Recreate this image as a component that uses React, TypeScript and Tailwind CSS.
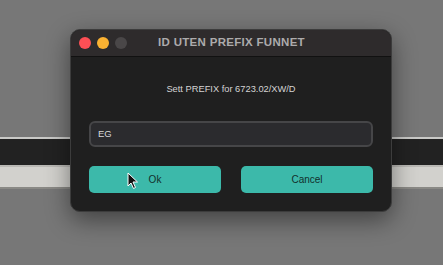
import React from "react";

function Cursor() {
  return (
    <svg width="12" height="18" viewBox="0 0 12 18" className="absolute left-[127px] top-[172px]">
      <path d="M1 1 L1 14 L4 11 L6.5 16.5 L8.5 15.5 L6 10 L10.5 10 Z" fill="#111" stroke="#fff" strokeWidth="1" strokeLinejoin="round" />
    </svg>
  );
}

export default function App() {
  return (
    <div className="relative h-[265px] w-full overflow-hidden bg-[#777777] font-['Liberation_Sans',Arial,sans-serif]">
      {/* background app stripes */}
      <div className="flex flex-col pt-[137px]">
        <div className="h-[2px] bg-[#c9c9c7]" />
        <div className="h-[26px] bg-[#222222]" />
        <div className="h-[2px] bg-[#b9b8b4]" />
        <div className="h-[20px] bg-[#d2d1cd]" />
        <div className="h-[2px] bg-[#8a8985]" />
      </div>

      {/* dialog window */}
      <div className="absolute left-[70px] top-[29px] flex h-[183px] w-[322px] flex-col overflow-hidden rounded-[10px] border border-[#3c3c3c] bg-[#1f1f1f] shadow-[0_8px_24px_rgba(0,0,0,0.45)]">
        <div className="relative flex h-[27px] items-center border-b border-[#111] bg-[#2e2b2c] px-[8px]">
          <div className="flex gap-[6px]">
            <span className="h-[12px] w-[12px] rounded-full bg-[#fe4f55]" />
            <span className="h-[12px] w-[12px] rounded-full bg-[#fbb232]" />
            <span className="h-[12px] w-[12px] rounded-full bg-[#4a4748]" />
          </div>
          <div className="absolute inset-0 flex items-center justify-center pl-[1px] text-[11.5px] font-bold tracking-[0.3px] text-[#adabac]">
            ID UTEN PREFIX FUNNET
          </div>
        </div>

        <div className="flex flex-1 flex-col px-[18px]">
          <p className="mt-[26px] text-center text-[9.3px] text-[#d4d4d4]">Sett PREFIX for 6723.02/XW/D</p>

          <div className="mt-[24px] flex h-[26px] items-center rounded-[6px] border-2 border-[#464648] bg-[#2b2b2e] px-[7px] text-[9.5px] text-[#d8d8d8]">
            EG
          </div>

          <div className="mt-[19px] flex justify-between">
            <button className="flex h-[27px] w-[132px] items-center justify-center rounded-[5px] bg-[#3cb9aa] text-[10px] text-[#12302c]">
              Ok
            </button>
            <button className="flex h-[27px] w-[132px] items-center justify-center rounded-[5px] bg-[#3cb9aa] text-[10px] text-[#12302c]">
              Cancel
            </button>
          </div>
        </div>
      </div>

      <Cursor />
    </div>
  );
}
